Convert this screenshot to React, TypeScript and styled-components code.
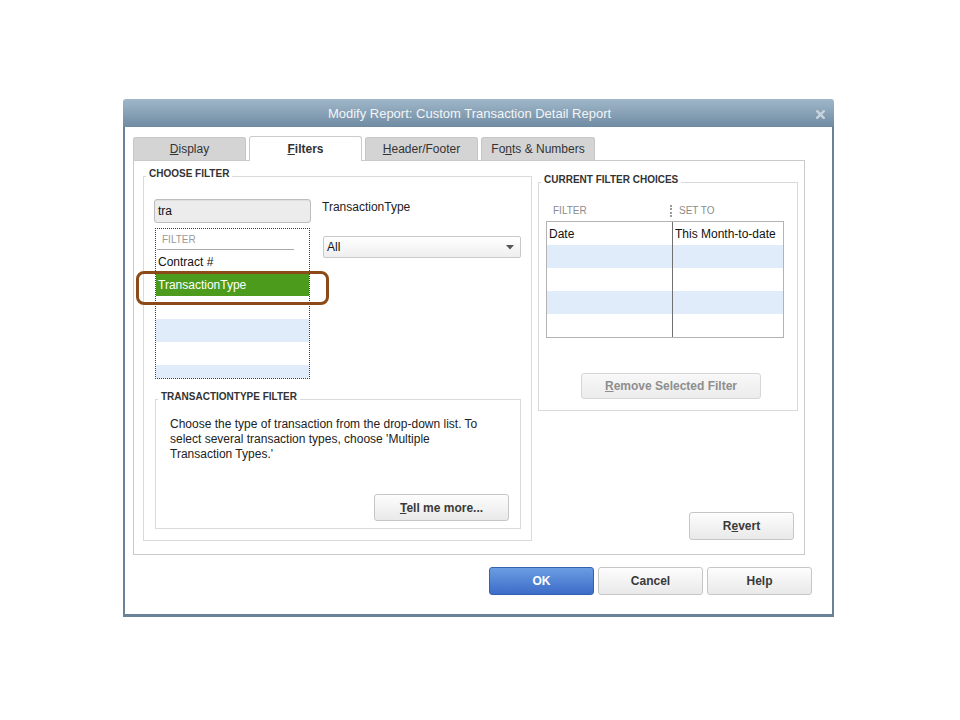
import React from "react";
import styled, { createGlobalStyle } from "styled-components";

const GlobalStyle = createGlobalStyle`
  html, body {
    margin: 0;
    background: #ffffff;
  }
  body {
    font-family: "Liberation Sans", Arial, sans-serif;
    font-size: 12px;
    color: #222;
  }
  * {
    box-sizing: border-box;
  }
`;

const Page = styled.div`
  width: 960px;
  height: 720px;
  padding: 99px 0 0 123px;
`;

const Dialog = styled.div`
  width: 711px;
`;

const TitleBar = styled.div`
  display: flex;
  align-items: center;
  height: 28px;
  background: linear-gradient(#a0b7c9, #6f8ba2);
  border-radius: 3px 3px 0 0;
`;

const Title = styled.div`
  flex: 1;
  text-align: center;
  font-size: 13px;
  color: #f2f5f8;
`;

const CloseBox = styled.div`
  width: 18px;
  display: flex;
  align-items: center;
  padding-top: 2px;
`;

const DialogBody = styled.div`
  background: #fff;
  border: 2px solid #6a8297;
  border-top: none;
  border-bottom-width: 3px;
  padding: 9px 20px 19px 8px;
`;

const TabRow = styled.div`
  display: flex;
  align-items: flex-end;
  gap: 3px;
  height: 24px;
  position: relative;
  z-index: 1;
`;

const Tab = styled.div<{ $active?: boolean; $width?: number }>`
  width: ${({ $width }) => $width ?? 113}px;
  height: ${({ $active }) => ($active ? 25 : 23)}px;
  line-height: ${({ $active }) => ($active ? 25 : 23)}px;
  margin-bottom: ${({ $active }) => ($active ? -1 : 0)}px;
  text-align: center;
  font-size: 12px;
  font-weight: ${({ $active }) => ($active ? "bold" : "normal")};
  color: #333;
  background: ${({ $active }) => ($active ? "#ffffff" : "#d4d4d4")};
  border: 1px solid ${({ $active }) => ($active ? "#cbcbcb" : "#c6c6c6")};
  border-bottom: none;
  border-radius: 3px 3px 0 0;
`;

const Key = styled.span`
  text-decoration: underline;
  text-underline-offset: 1px;
`;

const Panel = styled.div`
  width: 672px;
  border: 1px solid #cacaca;
  padding: 7px 6px 13px 9px;
  display: grid;
  grid-template-columns: 389px 260px;
  column-gap: 6px;
`;

const Group = styled.fieldset<{ $top?: number }>`
  margin: ${({ $top }) => $top ?? 0}px 0 0 0;
  padding: 0;
  min-width: 0;
  border: 1px solid #dadada;
`;

const InnerGroup = styled(Group)`
  margin: 12px 0 0 1px;
`;

const GroupTitle = styled.legend`
  margin-left: 2px;
  padding: 0 3px 5px;
  font-size: 10px;
  line-height: 12px;
  font-weight: bold;
  color: #333;
`;

const ChooseBody = styled.div`
  padding: 14px 10px 11px 10px;
`;

const ChooseGrid = styled.div`
  display: grid;
  grid-template-columns: 157px 199px;
  column-gap: 11px;
`;

const Column = styled.div`
  display: flex;
  flex-direction: column;
`;

const SearchBox = styled.div`
  height: 24px;
  line-height: 22px;
  padding-left: 3px;
  font-size: 12px;
  color: #111;
  background: #ececec;
  border: 1px solid #bdbdbd;
  border-radius: 3px;
  box-shadow: inset 0 1px 1px rgba(0, 0, 0, 0.06);
`;

const ListWrap = styled.div`
  position: relative;
  width: 155px;
  height: 151px;
  margin: 5px 0 0 1px;
`;

const List = styled.div`
  height: 100%;
  border: 1px dotted #3a3a3a;
  overflow: hidden;
  background: #fff;
`;

const ListHeader = styled.div`
  height: 21px;
  margin: 0 15px 0 1px;
  padding-left: 5px;
  line-height: 21px;
  font-size: 10px;
  color: #9a9a9a;
  border-bottom: 1px solid #a8a8a8;
`;

const ListRow = styled.div<{ $selected?: boolean; $stripe?: boolean }>`
  height: 23px;
  line-height: 24px;
  padding-left: 2px;
  font-size: 12px;
  color: ${({ $selected }) => ($selected ? "#ffffff" : "#111")};
  background: ${({ $selected, $stripe }) =>
    $selected ? "#4d9b1d" : $stripe ? "#e1ecfb" : "#ffffff"};
`;

const Highlight = styled.div`
  position: absolute;
  left: -19px;
  top: 43px;
  width: 193px;
  height: 34px;
  border: 3px solid #8b4a17;
  border-radius: 8px;
  pointer-events: none;
`;

const FieldLabel = styled.div`
  margin-top: 1px;
  line-height: 14px;
  font-size: 12px;
  color: #222;
`;

const Select = styled.div`
  display: flex;
  align-items: center;
  justify-content: space-between;
  width: 198px;
  height: 22px;
  margin: 22px 0 0 1px;
  padding: 0 6px 0 3px;
  font-size: 12px;
  color: #111;
  background: linear-gradient(#ffffff, #eeeeee);
  border: 1px solid #c9c9c9;
  border-radius: 2px;
`;

const InfoBody = styled.div`
  height: 120px;
  display: flex;
  flex-direction: column;
  padding: 9px 11px 7px 14px;
`;

const InfoText = styled.p`
  margin: 0;
  padding-right: 21px;
  font-size: 12px;
  line-height: 15px;
  color: #222;
`;

const RightColumn = styled.div`
  display: flex;
  flex-direction: column;
`;

const ChoicesBody = styled.div`
  padding: 0 12px 11px 7px;
`;

const TableHead = styled.div`
  display: grid;
  grid-template-columns: 126px 1fr;
  height: 30px;
  padding-top: 14px;
  font-size: 10px;
  line-height: 12px;
  color: #8c8c8c;
`;

const HeadCell = styled.div<{ $divider?: boolean }>`
  height: 12px;
  padding-left: 7px;
  margin-left: ${({ $divider }) => ($divider ? -2 : 0)}px;
  border-left: ${({ $divider }) => ($divider ? "2px dotted #9a9a9a" : "none")};
`;

const Table = styled.div`
  width: 238px;
  border: 1px solid #b3b3b3;
`;

const TableRow = styled.div<{ $stripe?: boolean }>`
  display: grid;
  grid-template-columns: 125px 1fr;
  height: 23px;
  line-height: 24px;
  font-size: 12px;
  color: #111;
  background: ${({ $stripe }) => ($stripe ? "#e1ecfb" : "#ffffff")};
`;

const Cell = styled.div<{ $divider?: boolean }>`
  padding-left: 2px;
  white-space: nowrap;
  overflow: hidden;
  border-left: ${({ $divider }) => ($divider ? "1px solid #707070" : "none")};
`;

const Button = styled.button<{
  $width: number;
  $height?: number;
  $primary?: boolean;
  $disabled?: boolean;
}>`
  width: ${({ $width }) => $width}px;
  height: ${({ $height }) => $height ?? 28}px;
  flex: none;
  padding: 0;
  font-family: "Liberation Sans", Arial, sans-serif;
  font-size: 12px;
  font-weight: bold;
  color: ${({ $primary, $disabled }) =>
    $primary ? "#ffffff" : $disabled ? "#8e8e8e" : "#3a3a3a"};
  background: ${({ $primary, $disabled }) =>
    $primary
      ? "linear-gradient(#6a9de2, #3d6cc8)"
      : $disabled
      ? "linear-gradient(#f8f8f8, #ececec)"
      : "linear-gradient(#fdfdfd, #e9e9e9)"};
  border: 1px solid
    ${({ $primary, $disabled }) =>
      $primary ? "#3560b0" : $disabled ? "#d6d6d6" : "#c6c6c6"};
  border-radius: 3px;
`;

const RemoveButton = styled(Button)`
  margin: 35px 0 0 35px;
`;

const TellButton = styled(Button)`
  margin-top: auto;
  align-self: flex-end;
`;

const RevertButton = styled(Button)`
  margin: auto 4px 1px 0;
  align-self: flex-end;
`;

const Footer = styled.div`
  display: flex;
  justify-content: flex-end;
  gap: 4px;
  margin-top: 12px;
`;

const filterRows = [
  { label: "Contract #" },
  { label: "TransactionType", selected: true },
  { label: "" },
  { label: "" },
  { label: "" },
  { label: "" },
];

const choiceRows = [
  ["Date", "This Month-to-date"],
  ["", ""],
  ["", ""],
  ["", ""],
  ["", ""],
];

function CloseIcon() {
  return (
    <svg width="9" height="9" viewBox="0 0 9 9">
      <path
        d="M1.2 1.2 L7.8 7.8 M7.8 1.2 L1.2 7.8"
        stroke="#c9d3dc"
        strokeWidth="2.4"
        strokeLinecap="square"
      />
    </svg>
  );
}

function Arrow() {
  return (
    <svg width="8" height="5" viewBox="0 0 8 5">
      <path d="M0 0 H8 L4 4.5 Z" fill="#555" />
    </svg>
  );
}

export default function App() {
  return (
    <Page>
      <GlobalStyle />
      <Dialog>
        <TitleBar>
          <Title>Modify Report: Custom Transaction Detail Report</Title>
          <CloseBox>
            <CloseIcon />
          </CloseBox>
        </TitleBar>
        <DialogBody>
          <TabRow>
            <Tab>
              <Key>D</Key>isplay
            </Tab>
            <Tab $active>
              <Key>F</Key>ilters
            </Tab>
            <Tab>
              <Key>H</Key>eader/Footer
            </Tab>
            <Tab $width={114}>
              Fo<Key>n</Key>ts &amp; Numbers
            </Tab>
          </TabRow>
          <Panel>
            <Group>
              <GroupTitle>CHOOSE FILTER</GroupTitle>
              <ChooseBody>
                <ChooseGrid>
                  <Column>
                    <SearchBox>tra</SearchBox>
                    <ListWrap>
                      <List>
                        <ListHeader>FILTER</ListHeader>
                        {filterRows.map((row, i) => (
                          <ListRow
                            key={i}
                            $selected={row.selected}
                            $stripe={i % 2 === 1 && !row.selected}
                          >
                            {row.label}
                          </ListRow>
                        ))}
                      </List>
                      <Highlight />
                    </ListWrap>
                  </Column>
                  <Column>
                    <FieldLabel>TransactionType</FieldLabel>
                    <Select>
                      <span>All</span>
                      <Arrow />
                    </Select>
                  </Column>
                </ChooseGrid>
                <InnerGroup>
                  <GroupTitle>TRANSACTIONTYPE FILTER</GroupTitle>
                  <InfoBody>
                    <InfoText>
                      Choose the type of transaction from the drop-down list. To
                      select several transaction types, choose 'Multiple
                      Transaction Types.'
                    </InfoText>
                    <TellButton $width={135} $height={27}>
                      <Key>T</Key>ell me more...
                    </TellButton>
                  </InfoBody>
                </InnerGroup>
              </ChooseBody>
            </Group>
            <RightColumn>
              <Group $top={6}>
                <GroupTitle>CURRENT FILTER CHOICES</GroupTitle>
                <ChoicesBody>
                  <TableHead>
                    <HeadCell>FILTER</HeadCell>
                    <HeadCell $divider>SET TO</HeadCell>
                  </TableHead>
                  <Table>
                    {choiceRows.map(([filter, value], i) => (
                      <TableRow key={i} $stripe={i % 2 === 1}>
                        <Cell>{filter}</Cell>
                        <Cell $divider>{value}</Cell>
                      </TableRow>
                    ))}
                  </Table>
                  <RemoveButton $width={180} $height={26} $disabled>
                    <Key>R</Key>emove Selected Filter
                  </RemoveButton>
                </ChoicesBody>
              </Group>
              <RevertButton $width={105}>
                R<Key>e</Key>vert
              </RevertButton>
            </RightColumn>
          </Panel>
          <Footer>
            <Button $width={105} $primary>
              OK
            </Button>
            <Button $width={105}>Cancel</Button>
            <Button $width={105}>Help</Button>
          </Footer>
        </DialogBody>
      </Dialog>
    </Page>
  );
}
